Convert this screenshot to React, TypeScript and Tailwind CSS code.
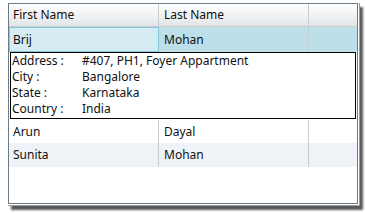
import React from "react";

const font = { fontFamily: '"Noto Sans", "Open Sans", sans-serif' };

export default function App() {
  return (
    <div className="w-[365px] h-[213px] bg-white pl-[8px] pt-[3px] text-[12px] text-[#111]" style={font}>
      <div className="w-[352px] h-[203px] bg-white pr-[2px] pb-[2px] border-r border-b border-[#9a9a9a] shadow-[3px_4px_2px_rgba(0,0,0,0.65)]">
        <div className="w-[350px] h-[201px] border border-[#6b7b88] flex flex-col bg-white">
          {/* header */}
          <div className="grid grid-cols-[150px_150px_1fr] h-[23px] border-b border-[#c9cdd1] bg-gradient-to-b from-white to-[#e2e5e8] shrink-0">
            <div className="border-r border-[#c9cdd1] pl-[4px] flex items-center">First Name</div>
            <div className="border-r border-[#c9cdd1] pl-[5px] flex items-center">Last Name</div>
            <div />
          </div>
          {/* selected row */}
          <div className="grid grid-cols-[150px_150px_1fr] h-[25px] bg-[#bcdfe9] shrink-0">
            <div className="border border-[#86c5da] bg-[#d6ecf3] pl-[3px] flex items-center">Brij</div>
            <div className="border-r border-[#c9cdd1] pl-[5px] flex items-center">Mohan</div>
            <div />
          </div>
          {/* details */}
          <div className="ml-[1px] mr-[1px] h-[67px] border border-black flex flex-col shrink-0 leading-[16px]">
            {[
              ["Address :", "#407, PH1, Foyer Appartment"],
              ["City :", "Bangalore"],
              ["State :", "Karnataka"],
              ["Country :", "India"],
            ].map(([k, v]) => (
              <div key={k} className="flex h-[16px]">
                <div className="w-[71px] pl-[1px]">{k}</div>
                <div>{v}</div>
              </div>
            ))}
          </div>
          {/* Arun */}
          <div className="grid grid-cols-[150px_150px_1fr] h-[24px] shrink-0 pt-[1px]">
            <div className="border-r border-[#c9cdd1] pl-[4px] flex items-center">Arun</div>
            <div className="border-r border-[#c9cdd1] pl-[5px] flex items-center">Dayal</div>
            <div />
          </div>
          {/* Sunita */}
          <div className="grid grid-cols-[150px_150px_1fr] h-[24px] bg-[#eff3f8] shrink-0">
            <div className="border-r border-[#c9cdd1] pl-[4px] flex items-center">Sunita</div>
            <div className="border-r border-[#c9cdd1] pl-[5px] flex items-center">Mohan</div>
            <div />
          </div>
          <div className="flex-1" />
        </div>
      </div>
    </div>
  );
}
